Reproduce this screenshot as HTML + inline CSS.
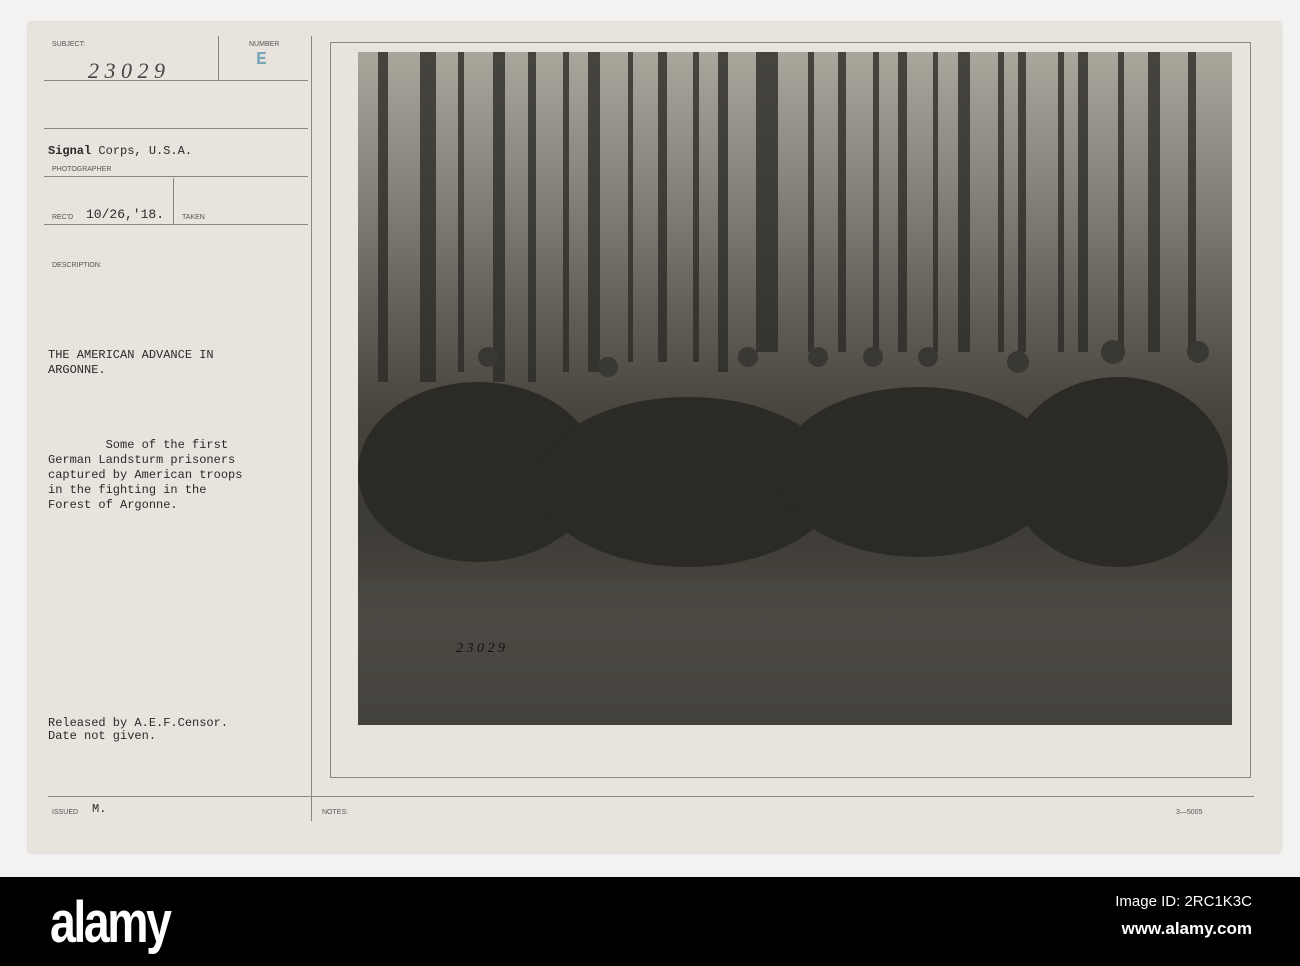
<!DOCTYPE html>
<html><head><style>
body{margin:0;width:1300px;height:966px;background:#f3f2f0;position:relative;overflow:hidden;font-family:"Liberation Mono",monospace;}
.card{position:absolute;left:28px;top:22px;width:1253px;height:831px;background:#e8e3dc;border-radius:4px;box-shadow:0 0 2px #bbb;}
.l{position:absolute;background:#8a8680;}
.t{position:absolute;color:#2a2a2a;font-size:12px;white-space:pre;}
.s{position:absolute;color:#555;font-size:7px;font-family:"Liberation Sans",sans-serif;}
.photo{position:absolute;left:358px;top:52px;width:874px;height:673px;overflow:hidden;
background:linear-gradient(180deg,#a9a79c 0%,#85837a 20%,#5e5c54 40%,#45433c 55%,#3d3b35 70%,#4c4a43 85%,#3f3d37 100%);}
.bar{position:absolute;left:0;top:877px;width:1300px;height:89px;background:#000;}
</style></head><body>
<div class="card">
<div class="l" style="left:16px;top:58px;width:264px;height:1px"></div>
<div class="l" style="left:16px;top:106px;width:264px;height:1px"></div>
<div class="l" style="left:16px;top:154px;width:264px;height:1px"></div>
<div class="l" style="left:16px;top:202px;width:264px;height:1px"></div>
<div class="l" style="left:190px;top:14px;width:1px;height:44px"></div>
<div class="l" style="left:145px;top:156px;width:1px;height:46px"></div>
<div class="l" style="left:283px;top:14px;width:1px;height:785px"></div>
<div class="l" style="left:302px;top:20px;width:920px;height:1px"></div>
<div class="l" style="left:302px;top:20px;width:1px;height:735px"></div>
<div class="l" style="left:1222px;top:20px;width:1px;height:735px"></div>
<div class="l" style="left:302px;top:755px;width:921px;height:1px"></div>
<div class="l" style="left:20px;top:774px;width:1206px;height:1px"></div>
</div>
<div class="s" style="left:52px;top:41px">SUBJECT:</div>
<div class="t" style="left:88px;top:58px;font-size:22px;font-family:'Liberation Serif',serif;font-style:italic;color:#444">2 3 0 2 9</div>
<div class="s" style="left:249px;top:41px">NUMBER</div>
<div class="t" style="left:256px;top:50px;font-size:18px;color:#7aa8b8;font-weight:bold">E</div>
<div class="t" style="left:48px;top:144px;font-size:12px"><b>Signal</b> Corps, U.S.A.</div>
<div class="s" style="left:52px;top:166px">PHOTOGRAPHER</div>
<div class="s" style="left:52px;top:214px">REC'D</div>
<div class="t" style="left:86px;top:207px;font-size:13px">10/26,'18.</div>
<div class="s" style="left:182px;top:214px">TAKEN</div>
<div class="s" style="left:52px;top:262px">DESCRIPTION:</div>
<div class="t" style="left:48px;top:348px;font-size:12px;line-height:15px">THE AMERICAN ADVANCE IN
ARGONNE.</div>
<div class="t" style="left:48px;top:438px;font-size:12px;line-height:15px">        Some of the first
German Landsturm prisoners
captured by American troops
in the fighting in the
Forest of Argonne.</div>
<div class="t" style="left:48px;top:717px;font-size:12px;line-height:13px">Released by A.E.F.Censor.
Date not given.</div>
<div class="s" style="left:52px;top:809px">ISSUED</div>
<div class="t" style="left:92px;top:802px">M.</div>
<div class="s" style="left:322px;top:809px">NOTES:</div>
<div class="s" style="left:1176px;top:809px">3—5005</div>
<div class="photo">
<svg width="874" height="673">
<g fill="#2e2c27" opacity=".8">
<rect x="20" y="0" width="10" height="330"/><rect x="62" y="0" width="16" height="330"/><rect x="100" y="0" width="6" height="320"/><rect x="135" y="0" width="12" height="330"/><rect x="170" y="0" width="8" height="330"/>
<rect x="205" y="0" width="6" height="320"/><rect x="230" y="0" width="12" height="320"/><rect x="270" y="0" width="5" height="310"/><rect x="300" y="0" width="9" height="310"/><rect x="335" y="0" width="6" height="310"/><rect x="360" y="0" width="10" height="320"/>
<rect x="398" y="0" width="22" height="300"/><rect x="450" y="0" width="6" height="300"/><rect x="480" y="0" width="8" height="300"/><rect x="515" y="0" width="6" height="300"/><rect x="540" y="0" width="9" height="300"/>
<rect x="575" y="0" width="5" height="300"/><rect x="600" y="0" width="12" height="300"/><rect x="640" y="0" width="6" height="300"/><rect x="660" y="0" width="8" height="300"/><rect x="700" y="0" width="6" height="300"/><rect x="720" y="0" width="10" height="300"/><rect x="760" y="0" width="6" height="300"/><rect x="790" y="0" width="12" height="300"/><rect x="830" y="0" width="8" height="300"/>
</g>
<g fill="#2c2a25">
<ellipse cx="120" cy="420" rx="120" ry="90"/>
<ellipse cx="330" cy="430" rx="150" ry="85"/>
<ellipse cx="560" cy="420" rx="140" ry="85"/>
<ellipse cx="760" cy="420" rx="110" ry="95"/>
<g fill="#3a3832"><circle cx="130" cy="305" r="10"/><circle cx="250" cy="315" r="10"/><circle cx="390" cy="305" r="10"/><circle cx="460" cy="305" r="10"/><circle cx="515" cy="305" r="10"/><circle cx="570" cy="305" r="10"/><circle cx="660" cy="310" r="11"/><circle cx="755" cy="300" r="12"/><circle cx="840" cy="300" r="11"/></g>
</g>
<rect x="0" y="530" width="874" height="143" fill="#4a4842" opacity=".5"/>
<text x="98" y="600" font-family="Liberation Serif" font-style="italic" font-size="14" fill="#111">2 3 0 2 9</text>
</svg>
</div>
<div class="bar">
<div style="position:absolute;left:50px;top:12px;color:#fff;font:bold 58px 'Liberation Sans Narrow','Liberation Sans',sans-serif;letter-spacing:-3px;transform:scaleX(.8);transform-origin:left">alamy</div>
<div style="position:absolute;right:48px;top:16px;color:#fff;font:15px 'Liberation Sans Narrow','Liberation Sans',sans-serif">Image ID: 2RC1K3C</div>
<div style="position:absolute;right:48px;top:42px;color:#fff;font:bold 17px 'Liberation Sans Narrow','Liberation Sans',sans-serif">www.alamy.com</div>
</div>
</body></html>
